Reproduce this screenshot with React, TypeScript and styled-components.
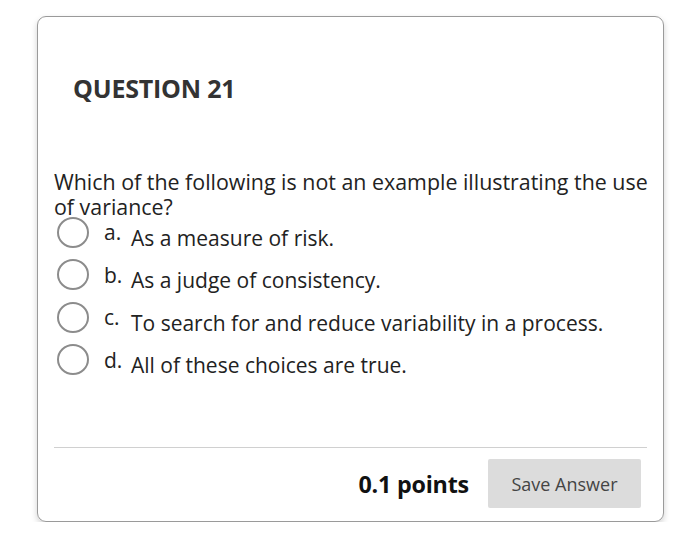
import React, { useState } from "react";
import styled, { createGlobalStyle } from "styled-components";

const GlobalStyle = createGlobalStyle`
  body {
    margin: 0;
    background: #ffffff;
    font-family: "Open Sans", "Liberation Sans", sans-serif;
  }
`;

const Card = styled.div`
  box-sizing: border-box;
  margin: 16px 0 0 37px;
  width: 627px;
  height: 506px;
  border: 1.5px solid #9a9a9a;
  border-radius: 9px;
  box-shadow: 0 3px 6px rgba(0, 0, 0, 0.18);
  padding: 0 16px 0 16px;
  display: flex;
  flex-direction: column;
`;

const Heading = styled.h2`
  margin: 56px 0 0 19px;
  font-size: 25px;
  line-height: 30px;
  font-weight: 700;
  letter-spacing: -0.2px;
  color: #333333;
`;

const QuestionText = styled.p`
  margin: 66px -10px 0 0;
  font-size: 21.4px;
  line-height: 25px;
  color: #222222;
`;

const Options = styled.div`
  margin-top: -8px;
  display: flex;
  flex-direction: column;
`;

const OptionRow = styled.label`
  display: flex;
  align-items: center;
  height: 42.5px;
  cursor: pointer;
`;

const Radio = styled.span<{ $checked: boolean }>`
  box-sizing: border-box;
  width: 32px;
  height: 31px;
  margin-left: 3px;
  border: 2px solid #8c8c8c;
  border-radius: 50%;
  flex-shrink: 0;
  display: flex;
  align-items: center;
  justify-content: center;
  &::after {
    content: "";
    width: 15px;
    height: 15px;
    border-radius: 50%;
    background: ${(p) => (p.$checked ? "#555" : "transparent")};
  }
`;

const Letter = styled.span`
  margin-left: 15px;
  width: 27px;
  font-size: 21px;
  line-height: 20px;
  color: #222222;
`;

const Label = styled.span`
  font-size: 21px;
  line-height: 22px;
  color: #222222;
  margin-top: 11px;
`;

const Footer = styled.div`
  margin-top: auto;
  border-top: 1.5px solid #d0d0d0;
  padding: 11px 6px 13px 0;
  display: flex;
  justify-content: flex-end;
  align-items: center;
  gap: 19px;
`;

const Points = styled.span`
  font-size: 23.3px;
  font-weight: 700;
  color: #111111;
  letter-spacing: -0.2px;
`;

const SaveButton = styled.button`
  width: 153px;
  height: 49px;
  border: none;
  border-radius: 2px;
  background: #dcdcdc;
  color: #444444;
  font-family: "Open Sans", "Liberation Sans", sans-serif;
  font-size: 18px;
  cursor: pointer;
`;

const choices = [
  { key: "a.", text: "As a measure of risk." },
  { key: "b.", text: "As a judge of consistency." },
  { key: "c.", text: "To search for and reduce variability in a process." },
  { key: "d.", text: "All of these choices are true." },
];

const App: React.FC = () => {
  const [selected, setSelected] = useState<number | null>(null);

  return (
    <>
      <GlobalStyle />
      <Card>
        <Heading>QUESTION 21</Heading>
        <QuestionText>
          Which of the following is not an example illustrating the use of
          variance?
        </QuestionText>
        <Options>
          {choices.map((c, i) => (
            <OptionRow key={c.key} onClick={() => setSelected(i)}>
              <Radio $checked={selected === i} />
              <Letter>{c.key}</Letter>
              <Label>{c.text}</Label>
            </OptionRow>
          ))}
        </Options>
        <Footer>
          <Points>0.1 points</Points>
          <SaveButton>Save Answer</SaveButton>
        </Footer>
      </Card>
    </>
  );
};

export default App;
